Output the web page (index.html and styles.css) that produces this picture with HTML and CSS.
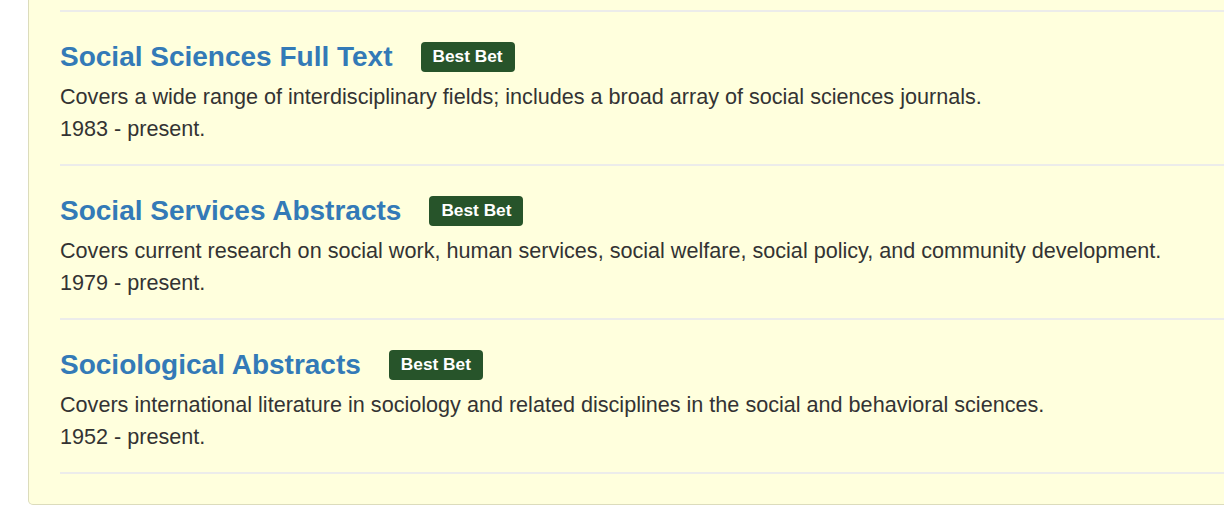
FILE: index.html
```html
<!DOCTYPE html>
<html lang="en">
<head>
<meta charset="utf-8">
<title>Databases</title>
<link rel="stylesheet" href="styles.css">
</head>
<body>
<div class="panel">
  <ul class="db-list">
    <li class="db-item">
      <div class="db-head">
        <a class="db-title" href="#">Social Sciences Full Text</a>
        <span class="badge">Best Bet</span>
      </div>
      <p class="db-desc">Covers a wide range of interdisciplinary fields; includes a broad array of social sciences journals.</p>
      <p class="db-desc">1983 - present.</p>
    </li>
    <li class="db-item">
      <div class="db-head">
        <a class="db-title" href="#">Social Services Abstracts</a>
        <span class="badge">Best Bet</span>
      </div>
      <p class="db-desc">Covers current research on social work, human services, social welfare, social policy, and community development.</p>
      <p class="db-desc">1979 - present.</p>
    </li>
    <li class="db-item">
      <div class="db-head">
        <a class="db-title" href="#">Sociological Abstracts</a>
        <span class="badge">Best Bet</span>
      </div>
      <p class="db-desc">Covers international literature in sociology and related disciplines in the social and behavioral sciences.</p>
      <p class="db-desc">1952 - present.</p>
    </li>
  </ul>
</div>
</body>
</html>
```
FILE: styles.css
```css
html, body {
  margin: 0;
  padding: 0;
  background: #ffffff;
  overflow: hidden;
}
body {
  font-family: "Liberation Sans", Arial, Helvetica, sans-serif;
  color: #333333;
  width: 1224px;
  height: 512px;
}
.panel {
  margin-left: 28px;
  width: 1240px;
  box-sizing: border-box;
  background: #ffffdd;
  border: 1px solid #dcdcbc;
  border-top: 0;
  border-radius: 0 0 5px 5px;
  padding: 10px 0 30px 31px;
}
.db-list {
  list-style: none;
  margin: 0;
  padding: 0;
  border-top: 2px solid #ececea;
}
.db-item {
  border-bottom: 2px solid #ececea;
  padding: 29px 0 19px 0;
}
.db-head {
  display: flex;
  align-items: center;
  gap: 28px;
  height: 31px;
}
.db-title {
  font-size: 28px;
  font-weight: bold;
  line-height: 31px;
  color: #337ab7;
  text-decoration: none;
}
.badge {
  display: inline-flex;
  align-items: center;
  height: 30px;
  padding: 0 12px;
  box-sizing: border-box;
  background: #27542a;
  color: #ffffff;
  font-size: 17.3px;
  font-weight: bold;
  border-radius: 4px;
  line-height: 1;
}
.db-desc {
  margin: 0;
  font-size: 21.6px;
  line-height: 32px;
}
.db-head + .db-desc {
  margin-top: 9px;
}
```
